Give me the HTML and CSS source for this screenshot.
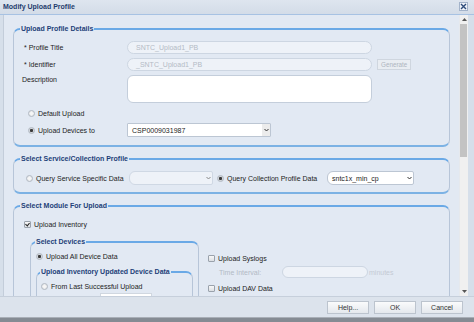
FILE: index.html
```html
<!DOCTYPE html>
<html lang="en">
<head>
    <meta charset="UTF-8">
    <title>Modify Upload Profile</title>
    <link rel="stylesheet" href="styles.css">
</head>
<body>
    <div class="dialog">
        <div class="titlebar">
            <span class="title">Modify Upload Profile</span>
            <span class="close">
                <svg width="7" height="7" viewBox="0 0 7 7"><path d="M1 1L6 6M6 1L1 6" stroke="#2d4b7a" stroke-width="1.4"/></svg>
            </span>
        </div>

        <div class="main">
            <div class="content">
                <fieldset class="group details">
                    <legend>Upload Profile Details</legend>
                    <div class="form-grid">
                        <div class="lbl req">* Profile Title</div>
                        <div class="field"><span class="input dim">SNTC_Upload1_PB</span></div>

                        <div class="lbl req">* Identifier</div>
                        <div class="field">
                            <span class="input dim">_SNTC_Upload1_PB</span>
                            <span class="btn-small">Generate</span>
                        </div>

                        <div class="lbl top">Description</div>
                        <div class="field"><span class="textarea"></span></div>

                        <div class="lbl span"><span class="radio"></span>Default Upload</div>

                        <div class="lbl"><span class="radio on"></span>Upload Devices to</div>
                        <div class="field">
                            <span class="select square wide">CSP0009031987<span class="arrow"><svg width="5" height="4" viewBox="0 0 5 4"><path d="M0.5 1L2.5 3L4.5 1" fill="none" stroke="#333" stroke-width="1"/></svg></span></span>
                        </div>
                    </div>
                </fieldset>

                <fieldset class="group service">
                    <legend>Select Service/Collection Profile</legend>
                    <div class="row">
                        <div class="opt opt-first"><span class="radio"></span>Query Service Specific Data</div>
                        <span class="select dis small"><span class="arrow"><svg width="5" height="4" viewBox="0 0 5 4"><path d="M0.5 1L2.5 3L4.5 1" fill="none" stroke="#888" stroke-width="1"/></svg></span></span>
                        <div class="opt opt-second"><span class="radio on"></span>Query Collection Profile Data</div>
                        <span class="select small">sntc1x_min_cp<span class="arrow"><svg width="5" height="4" viewBox="0 0 5 4"><path d="M0.5 1L2.5 3L4.5 1" fill="none" stroke="#333" stroke-width="1"/></svg></span></span>
                    </div>
                </fieldset>

                <fieldset class="group module">
                    <legend>Select Module For Upload</legend>
                    <div class="opt"><span class="check on"></span>Upload Inventory</div>
                    <div class="cols">
                        <fieldset class="group devices">
                            <legend>Select Devices</legend>
                            <div class="opt"><span class="radio on"></span>Upload All Device Data</div>
                            <fieldset class="group updated">
                                <legend>Upload Inventory Updated Device Data</legend>
                                <div class="opt"><span class="radio"></span>From Last Successful Upload</div>
                                <span class="date-box"></span>
                            </fieldset>
                        </fieldset>
                        <div class="side">
                            <div class="opt"><span class="check"></span>Upload Syslogs</div>
                            <div class="interval">
                                <span class="faint">Time Interval:</span>
                                <span class="input short"></span>
                                <span class="fainter">minutes</span>
                            </div>
                            <div class="opt"><span class="check"></span>Upload DAV Data</div>
                        </div>
                    </div>
                </fieldset>
            </div>

            <div class="scrollbar">
                <span class="sb-btn"><svg width="5" height="3" viewBox="0 0 5 3"><path d="M0 3L2.5 0L5 3Z" fill="#555"/></svg></span>
                <span class="sb-thumb"></span>
                <span class="sb-track"></span>
                <span class="sb-btn"><svg width="5" height="3" viewBox="0 0 5 3"><path d="M0 0L2.5 3L5 0Z" fill="#555"/></svg></span>
            </div>
        </div>

        <div class="footer">
            <span class="btn">Help...</span>
            <span class="btn">OK</span>
            <span class="btn">Cancel</span>
        </div>
        <div class="bottom-strip"></div>
    </div>
</body>
</html>
```

FILE: styles.css
```css
* {
    margin: 0;
    padding: 0;
    box-sizing: border-box;
}

body {
    width: 474px;
    height: 322px;
    overflow: hidden;
    background: #d6dfea;
    font-family: 'Liberation Sans', Arial, sans-serif;
    font-size: 7px;
    line-height: 9px;
    color: #1c1c1c;
}

.dialog {
    display: flex;
    flex-direction: column;
    height: 322px;
}

/* Title bar */
.titlebar {
    height: 15px;
    display: flex;
    align-items: center;
    justify-content: space-between;
    padding: 0 6px 1px 3px;
    background: linear-gradient(#dee5ef, #d3dce8);
    border-bottom: 1px solid #a7c2e3;
}

.title {
    font-weight: bold;
    color: #1f3c6c;
}

.close {
    width: 9px;
    height: 9px;
    border: 1px solid #a3b3ca;
    background: #eef2f8;
    display: flex;
    align-items: center;
    justify-content: center;
}

/* Main area */
.main {
    flex: 1;
    display: flex;
    min-height: 0;
    padding: 0 6px 0 3px;
}

.content {
    flex: 1;
    overflow: hidden;
    background: #e2e9f3;
    border-left: 1px solid #c3cdda;
    padding: 9px 9px 0 9px;
}

.group {
    border: 1px solid #b7c5d8;
    border-top: 2px solid #6aa9e6;
    border-bottom: 2px solid #7cb2e4;
    border-radius: 7px;
    margin-bottom: 7px;
}

.group legend {
    font-weight: bold;
    color: #1d3f78;
    padding: 0 1px;
    line-height: 9px;
}

/* Upload profile details */
.details {
    padding: 8px 8px 8px 8px;
}

.details legend {
    margin-left: -2px;
}

.form-grid {
    display: grid;
    grid-template-columns: 105px auto;
    grid-template-rows: 13px 13px 28px 12px 14px;
    row-gap: 4px;
}

.lbl {
    display: flex;
    align-items: center;
    white-space: nowrap;
}

.lbl.req {
    padding-left: 2px;
}

.lbl.top {
    align-items: flex-start;
}

.lbl.span {
    grid-column: 1 / 3;
}

.lbl .radio {
    margin-left: 6px;
}

.field {
    display: flex;
    align-items: center;
    gap: 5px;
}

.input {
    display: flex;
    align-items: center;
    width: 245px;
    height: 13px;
    padding-left: 8px;
    background: #eef2f8;
    border: 1px solid #cdd6e2;
    border-radius: 7px;
}

.input.dim {
    color: #b4bbc5;
}

.input.short {
    width: 86px;
    height: 12px;
}

.btn-small {
    height: 11px;
    padding: 0 3px;
    display: flex;
    align-items: center;
    background: #e9edf2;
    border: 1px solid #cfd6df;
    color: #aeb5be;
    font-size: 6.3px;
}

.textarea {
    width: 245px;
    height: 28px;
    background: #fff;
    border: 1px solid #c4cedb;
    border-radius: 6px;
}

/* Selects */
.select {
    position: relative;
    display: flex;
    align-items: center;
    height: 14px;
    padding-left: 4px;
    background: #fff;
    border: 1px solid #bcc6d3;
    border-radius: 6px 2px 2px 6px;
    color: #1c1c1c;
}

.select.square {
    border-radius: 1px;
}

.select.wide {
    width: 144px;
}

.select.small {
    width: 87px;
}

.select.dis {
    width: 84px;
    background: #eef2f8;
    border-color: #cfd8e4;
}

.select .arrow {
    position: absolute;
    right: 0;
    top: 0;
    bottom: 0;
    width: 8px;
    display: flex;
    align-items: center;
    justify-content: center;
    background: #ececec;
}

.select.dis .arrow,
.select.small .arrow {
    background: transparent;
}

/* Radios and checks */
.radio {
    display: inline-block;
    width: 7px;
    height: 7px;
    margin-right: 3px;
    border: 1px solid #b2b9c2;
    border-radius: 50%;
    background: radial-gradient(circle, #f6f6f6 30%, #d9dde2 100%);
    flex-shrink: 0;
}

.radio.on {
    background: radial-gradient(circle, #3a3a3a 0, #3a3a3a 1.3px, #d4d8dd 1.8px, #c8ccd2 100%);
}

.check {
    display: inline-block;
    width: 7px;
    height: 7px;
    margin-right: 3px;
    border: 1px solid #9aa2ac;
    border-radius: 1px;
    background: linear-gradient(#f8f8f8, #dcdfe3);
    flex-shrink: 0;
    position: relative;
}

.check.on::after {
    content: '';
    position: absolute;
    left: 1px;
    top: 0;
    width: 2px;
    height: 3px;
    border-right: 1px solid #222;
    border-bottom: 1px solid #222;
    transform: rotate(40deg);
}

.opt {
    display: flex;
    align-items: center;
    height: 9px;
    white-space: nowrap;
}

/* Service profile */
.service {
    padding: 8px 8px 7px 12px;
}

.service legend {
    margin-left: -6px;
}

.service .row {
    display: flex;
    align-items: center;
    height: 14px;
}

.opt-first {
    width: 103px;
}

.opt-second {
    width: 110px;
    margin-left: 4px;
}

/* Module */
.module {
    padding: 10px 8px 0 10px;
    margin-bottom: 0;
    height: 120px;
}

.module legend {
    margin-left: -4px;
}

.cols {
    display: flex;
    margin-top: 8px;
}

.devices {
    width: 169px;
    margin-left: 6px;
    padding: 6px 5px 0 5px;
    height: 80px;
}

.devices legend {
    margin-left: -1px;
}

.updated {
    margin-top: 6px;
    padding: 6px 4px 0 4px;
    height: 50px;
}

.date-box {
    display: block;
    width: 52px;
    height: 10px;
    margin: 2px 0 0 59px;
    background: #fff;
    border: 1px solid #d0d7e0;
}

.side {
    margin-left: 9px;
    padding-top: 17px;
}

.interval {
    display: flex;
    align-items: center;
    height: 12px;
    margin: 3px 0 6px 11px;
}

.faint {
    width: 63px;
    color: #b2bac5;
}

.fainter {
    margin-left: 1px;
    color: #c4cad3;
}

/* Scrollbar */
.scrollbar {
    width: 9px;
    display: flex;
    flex-direction: column;
    background: #f0f0f0;
    border-left: 1px solid #e6e9ed;
}

.sb-btn {
    height: 9px;
    display: flex;
    align-items: center;
    justify-content: center;
}

.sb-thumb {
    height: 133px;
    margin: 0 1px 0 0;
    background: #c3c3c3;
}

.sb-track {
    flex: 1;
}

/* Footer */
.footer {
    height: 21px;
    display: flex;
    align-items: center;
    justify-content: flex-end;
    gap: 5px;
    padding-right: 11px;
    background: #dce3ec;
    border-top: 1px solid #c6cfdb;
}

.btn {
    width: 42px;
    height: 13px;
    display: flex;
    align-items: center;
    justify-content: center;
    background: linear-gradient(#fafbfc, #e4e8ed);
    border: 1px solid #bcc4ce;
    color: #333;
}

.bottom-strip {
    height: 5px;
    background: #858b93;
    border-top: 1px solid #a9afb7;
}
```
